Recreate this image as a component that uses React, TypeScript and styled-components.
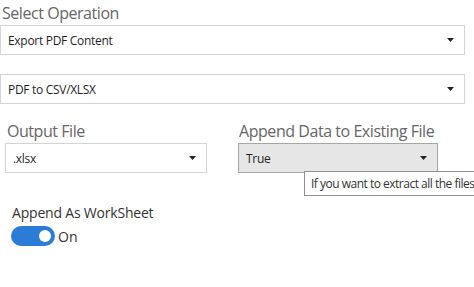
import * as React from 'react';
import styled, { createGlobalStyle } from 'styled-components';

const GlobalStyle = createGlobalStyle`
  html, body {
    margin: 0;
    padding: 0;
    background: #ffffff;
    font-family: 'Open Sans', 'Noto Sans', 'Liberation Sans', sans-serif;
    overflow: hidden;
  }
`;

interface ISelectProps {
  value: string;
  width: number;
  active?: boolean;
}

const Select: React.FunctionComponent<ISelectProps> = ({ value, width, active }) => {
  return (
    <StyledSelect $width={width} $active={active}>
      <StyledValue>{value}</StyledValue>
      <StyledCaret viewBox="0 0 7 4">
        <path d="M0 0 L7 0 L3.5 4 Z" fill="#222" />
      </StyledCaret>
    </StyledSelect>
  );
};

const App: React.FunctionComponent = () => {
  return (
    <StyledPage>
      <GlobalStyle />
      <StyledLabel $indent={2}>Select Operation</StyledLabel>
      <Select value="Export PDF Content" width={465} />
      <StyledSpacer $height={19} />
      <Select value="PDF to CSV/XLSX" width={465} />
      <StyledRow>
        <StyledField $left={5}>
          <StyledLabel $indent={2}>Output File</StyledLabel>
          <Select value=".xlsx" width={202} />
        </StyledField>
        <StyledField $left={31}>
          <StyledLabel $indent={1}>Append Data to Existing File</StyledLabel>
          <Select value="True" width={200} active />
          <StyledTooltip>If you want to extract all the files</StyledTooltip>
        </StyledField>
      </StyledRow>
      <StyledToggleBlock>
        <StyledToggleLabel>Append As WorkSheet</StyledToggleLabel>
        <StyledToggleRow>
          <StyledTrack>
            <StyledKnob />
          </StyledTrack>
          <StyledToggleText>On</StyledToggleText>
        </StyledToggleRow>
      </StyledToggleBlock>
    </StyledPage>
  );
};

const StyledPage = styled.div`
  width: 474px;
  height: 287px;
  padding-top: 2px;
  box-sizing: border-box;
  overflow: hidden;
`;

const StyledLabel = styled.div<{ $indent: number }>`
  padding-left: ${(p) => p.$indent}px;
  font-size: 16px;
  line-height: 23px;
  letter-spacing: -0.45px;
  color: #666666;
  white-space: nowrap;
`;

const StyledSpacer = styled.div<{ $height: number }>`
  height: ${(p) => p.$height}px;
`;

const StyledSelect = styled.div<{ $width: number; $active?: boolean }>`
  width: ${(p) => p.$width}px;
  height: 30px;
  box-sizing: border-box;
  display: flex;
  align-items: center;
  justify-content: space-between;
  padding: 0 10px 0 7px;
  border: 1px solid ${(p) => (p.$active ? '#a6a6a6' : '#d4d4d4')};
  background: ${(p) => (p.$active ? '#e6e6e6' : '#ffffff')};
`;

const StyledValue = styled.span`
  font-size: 12px;
  letter-spacing: -0.3px;
  color: #1f1f1f;
`;

const StyledCaret = styled.svg`
  width: 7px;
  height: 4px;
`;

const StyledRow = styled.div`
  display: flex;
  margin-top: 16px;
`;

const StyledField = styled.div<{ $left: number }>`
  position: relative;
  margin-left: ${(p) => p.$left}px;
`;

const StyledTooltip = styled.div`
  position: absolute;
  top: 51px;
  left: 66px;
  padding: 0 6px;
  height: 23px;
  display: flex;
  align-items: center;
  white-space: nowrap;
  background: #ffffff;
  border: 1px solid #8f8f8f;
  font-size: 12px;
  letter-spacing: -0.5px;
  color: #333333;
`;

const StyledToggleBlock = styled.div`
  margin-top: 30px;
  padding-left: 11px;
`;

const StyledToggleLabel = styled.div`
  font-size: 14px;
  line-height: 20px;
  letter-spacing: -0.2px;
  color: #333333;
  padding-left: 1px;
`;

const StyledToggleRow = styled.div`
  display: flex;
  align-items: center;
  gap: 3px;
  margin-top: 3px;
`;

const StyledTrack = styled.div`
  width: 44px;
  height: 20px;
  border-radius: 10px;
  background: #2b7cd6;
  display: flex;
  align-items: center;
  justify-content: flex-end;
  padding-right: 4px;
  box-sizing: border-box;
`;

const StyledKnob = styled.div`
  width: 12px;
  height: 12px;
  border-radius: 50%;
  background: #ffffff;
`;

const StyledToggleText = styled.span`
  font-size: 14px;
  color: #333333;
`;

export default App;
